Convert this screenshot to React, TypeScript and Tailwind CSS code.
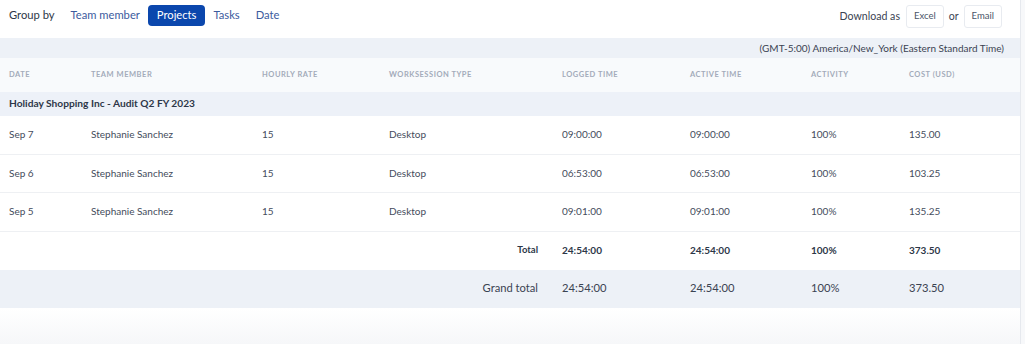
import React from "react";

const cols = "grid grid-cols-[82px_171px_127px_173px_128px_121px_98px_1fr] pl-[9px]";

const rows = [
  { date: "Sep 7", member: "Stephanie Sanchez", rate: "15", type: "Desktop", logged: "09:00:00", active: "09:00:00", activity: "100%", cost: "135.00" },
  { date: "Sep 6", member: "Stephanie Sanchez", rate: "15", type: "Desktop", logged: "06:53:00", active: "06:53:00", activity: "100%", cost: "103.25" },
  { date: "Sep 5", member: "Stephanie Sanchez", rate: "15", type: "Desktop", logged: "09:01:00", active: "09:01:00", activity: "100%", cost: "135.25" },
];

const headers = ["Date", "Team member", "Hourly rate", "Worksession type", "Logged time", "Active time", "Activity", "Cost (USD)"];

export default function App() {
  return (
    <div className="flex h-[344px] bg-[#f7f8fa] font-['Lato','Inter',sans-serif]">
      <div className="flex w-[1021px] flex-col border-r border-[#e6e9ee] bg-white">
        {/* toolbar */}
        <div className="flex h-[38px] items-start justify-between bg-white pl-[9px] pr-[18px] pt-[5px]">
          <div className="flex h-[21px] items-center text-[11.2px]">
            <span className="mr-[16px] text-[#2d3748]">Group by</span>
            <button className="text-[#3c5b9e]">Team member</button>
            <button className="ml-[8px] h-[21px] rounded-[4px] bg-[#0b47ad] px-[9px] text-white">Projects</button>
            <button className="ml-[8px] text-[#3c5b9e]">Tasks</button>
            <button className="ml-[16px] text-[#3c5b9e]">Date</button>
          </div>
          <div className="flex h-[23px] items-center text-[10.6px] text-[#3b4352]">
            <span className="mr-[6px]">Download as</span>
            <button className="h-[23px] rounded-[3px] border border-[#e8ebf0] px-[7px] text-[9.5px] text-[#4a5568]">Excel</button>
            <span className="mx-[5px]">or</span>
            <button className="h-[23px] rounded-[3px] border border-[#e8ebf0] px-[7px] text-[9.5px] text-[#4a5568]">Email</button>
          </div>
        </div>

        {/* timezone */}
        <div className="flex h-[20px] items-center justify-end bg-[#edf1f7] pr-[16px] text-[10px] text-[#3b4352]">
          (GMT-5:00) America/New_York (Eastern Standard Time)
        </div>

        {/* column headers */}
        <div className={`${cols} h-[34px] items-center bg-[#f8fafc]`}>
          {headers.map((h) => (
            <div key={h} className="text-[7.5px] font-bold uppercase tracking-[0.07em] text-[#a3abba]">
              {h}
            </div>
          ))}
        </div>

        {/* group */}
        <div className="flex h-[24px] items-center bg-[#edf1f8] pl-[9px] text-[10.2px] font-bold text-[#2d3748]">
          Holiday Shopping Inc - Audit Q2 FY 2023
        </div>

        {rows.map((r) => (
          <div key={r.date} className={`${cols} h-[38.5px] items-center border-b border-[#eef0f3] bg-white text-[10px] text-[#444c5c]`}>
            <div>{r.date}</div>
            <div>{r.member}</div>
            <div>{r.rate}</div>
            <div>{r.type}</div>
            <div>{r.logged}</div>
            <div>{r.active}</div>
            <div>{r.activity}</div>
            <div>{r.cost}</div>
          </div>
        ))}

        {/* total */}
        <div className={`${cols} h-[38px] items-center bg-white text-[10px] font-bold text-[#2d3748]`}>
          <div className="col-span-4 pr-[24px] text-right text-[9.5px]">Total</div>
          <div>24:54:00</div>
          <div>24:54:00</div>
          <div>100%</div>
          <div>373.50</div>
        </div>

        {/* grand total */}
        <div className={`${cols} h-[38px] items-center bg-[#edf1f7] text-[11.2px] text-[#3b4352]`}>
          <div className="col-span-4 pr-[24px] text-right">Grand total</div>
          <div>24:54:00</div>
          <div>24:54:00</div>
          <div>100%</div>
          <div>373.50</div>
        </div>

        <div className="flex-1 bg-gradient-to-b from-white to-[#f6f7f9]" />
      </div>
    </div>
  );
}
